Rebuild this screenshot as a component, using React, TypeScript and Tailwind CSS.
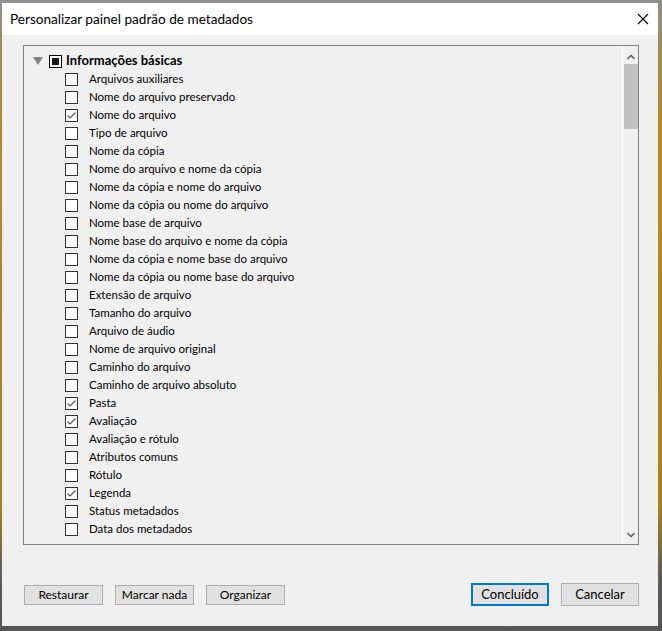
import React from 'react';

const items: { label: string; checked?: boolean }[] = [
  { label: 'Arquivos auxiliares' },
  { label: 'Nome do arquivo preservado' },
  { label: 'Nome do arquivo', checked: true },
  { label: 'Tipo de arquivo' },
  { label: 'Nome da cópia' },
  { label: 'Nome do arquivo e nome da cópia' },
  { label: 'Nome da cópia e nome do arquivo' },
  { label: 'Nome da cópia ou nome do arquivo' },
  { label: 'Nome base de arquivo' },
  { label: 'Nome base do arquivo e nome da cópia' },
  { label: 'Nome da cópia e nome base do arquivo' },
  { label: 'Nome da cópia ou nome base do arquivo' },
  { label: 'Extensão de arquivo' },
  { label: 'Tamanho do arquivo' },
  { label: 'Arquivo de áudio' },
  { label: 'Nome de arquivo original' },
  { label: 'Caminho do arquivo' },
  { label: 'Caminho de arquivo absoluto' },
  { label: 'Pasta', checked: true },
  { label: 'Avaliação', checked: true },
  { label: 'Avaliação e rótulo' },
  { label: 'Atributos comuns' },
  { label: 'Rótulo' },
  { label: 'Legenda', checked: true },
  { label: 'Status metadados' },
  { label: 'Data dos metadados' },
];

function Box({ checked }: { checked?: boolean }) {
  return (
    <span className="flex h-[13px] w-[13px] shrink-0 items-center justify-center border border-[#333333] bg-white">
      {checked && (
        <svg width="11" height="11" viewBox="0 0 11 11" fill="none">
          <path d="M1.5 5.5 L4 8 L9.5 2.5" stroke="#555555" strokeWidth="1.1" />
        </svg>
      )}
    </span>
  );
}

function Btn({ children, primary, big }: { children: React.ReactNode; primary?: boolean; big?: boolean }) {
  const frame = primary
    ? 'h-[23px] w-[78px] border-2 border-[#0078d7]'
    : big
      ? 'h-[23px] w-[78px] border border-[#adadad]'
      : 'h-[20px] w-[79px] border border-[#adadad]';
  return (
    <button
      className={`flex items-center justify-center bg-[#e1e1e1] text-black ${frame} ${big ? 'text-[13px]' : 'text-[12px]'}`}
    >
      {children}
    </button>
  );
}

export default function App() {
  return (
    <div
      className="h-[631px] w-[662px] pt-[3px] pl-[2px] pr-[4px] pb-[5px] bg-[linear-gradient(180deg,#8f8f8f_0%,#a08c5a_8%,#b88c1e_20%,#a8821c_80%,#5a5a5a_92%,#555555_100%)]"
      style={{ fontFamily: 'Lato, "Noto Sans", sans-serif' }}
    >
      <div className="flex h-full w-full flex-col bg-[#f0f0f0]">
        <div className="flex h-[32px] shrink-0 items-center justify-between bg-white pl-[8px] pr-[8px]">
          <span className="text-[13.6px] text-black">Personalizar painel padrão de metadados</span>
          <svg width="12" height="12" viewBox="0 0 12 12" className="mr-[1px]">
            <path d="M1 1 L11 11 M11 1 L1 11" stroke="#000" strokeWidth="1.1" />
          </svg>
        </div>

        <div className="ml-[21px] mt-[10px] flex h-[500px] w-[616px] border border-[#828282]">
          <div className="flex-1 pt-[6px] text-[11px] text-black">
            <div className="flex h-[18px] items-center">
              <svg width="10" height="8" viewBox="0 0 10 8" className="ml-[9px]">
                <path d="M0 0 H10 L5 8 Z" fill="#808080" />
              </svg>
              <span className="ml-[6px] flex h-[13px] w-[13px] items-center justify-center border border-black bg-white">
                <span className="h-[7px] w-[7px] bg-[#1a1a1a]" />
              </span>
              <span className="ml-[4px] text-[13px] font-bold">Informações básicas</span>
            </div>
            {items.map((it) => (
              <div key={it.label} className="flex h-[18px] items-center pl-[41px]">
                <Box checked={it.checked} />
                <span className="ml-[11px] text-[11.5px]">{it.label}</span>
              </div>
            ))}
          </div>
          <div className="flex w-[16px] flex-col items-center border-l border-white">
            <svg width="10" height="6" viewBox="0 0 10 6" className="mt-[8px]">
              <path d="M1.5 5 L5 1.5 L8.5 5" stroke="#606060" strokeWidth="1.6" fill="none" />
            </svg>
            <div className="mt-[4px] h-[65px] w-[14px] bg-[#c0c0c0]" />
            <div className="flex-1" />
            <svg width="10" height="6" viewBox="0 0 10 6" className="mb-[6px]">
              <path d="M1.5 1 L5 4.5 L8.5 1" stroke="#606060" strokeWidth="1.6" fill="none" />
            </svg>
          </div>
        </div>

        <div className="mt-[37px] flex h-[25px] items-center pl-[22px] pr-[19px]">
          <div className="flex items-center gap-[12px]">
            <Btn>Restaurar</Btn>
            <Btn>Marcar nada</Btn>
            <Btn>Organizar</Btn>
          </div>
          <div className="flex-1" />
          <div className="flex items-center gap-[12px]">
            <Btn primary big>Concluído</Btn>
            <Btn big>Cancelar</Btn>
          </div>
        </div>
      </div>
    </div>
  );
}
